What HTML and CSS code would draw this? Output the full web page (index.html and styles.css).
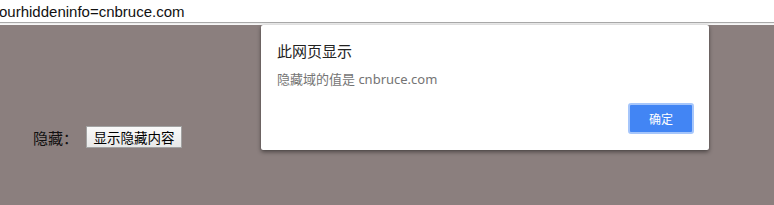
FILE: index.html
```html
<!DOCTYPE html>
<html lang="zh-CN">
<head>
    <meta charset="UTF-8">
    <title>隐藏域</title>
    <link rel="stylesheet" href="styles.css">
</head>
<body>
    <div class="address-bar">
        <span class="url">ourhiddeninfo=cnbruce.com</span>
    </div>
    <div class="page">
        <form class="hidden-form">
            <input type="hidden" name="yourhiddeninfo" value="cnbruce.com">
            <span class="label">隐藏：</span>
            <button type="button" class="show-btn">显示隐藏内容</button>
        </form>
    </div>

    <div class="alert">
        <div class="alert-title">此网页显示</div>
        <div class="alert-msg">隐藏域的值是 cnbruce.com</div>
        <div class="alert-actions">
            <button class="ok-btn">确定</button>
        </div>
    </div>
</body>
</html>
```

FILE: styles.css
```css
html, body {
    margin: 0;
    padding: 0;
    height: 100%;
}
body {
    font-family: "Noto Sans", "Noto Sans CJK SC", sans-serif;
    background: #8b7f7e;
    overflow: hidden;
    position: relative;
}
.address-bar {
    height: 22px;
    background: #fff;
    border-bottom: 1px solid #a9a9a9;
    box-shadow: 0 1px 0 #ececec, 0 2px 0 #f6f6f6;
    overflow: hidden;
    white-space: nowrap;
}
.url {
    display: inline-block;
    margin-left: -1px;
    font-family: "Liberation Sans", sans-serif;
    font-size: 15px;
    line-height: 18px;
    color: #111;
}
.page {
    padding: 103px 0 0 33px;
}
.hidden-form {
    display: flex;
    align-items: center;
}
.label {
    font-family: "Noto Sans CJK SC", sans-serif;
    font-size: 15px;
    color: #111;
    width: 53px;
}
.show-btn {
    font-family: "Noto Sans CJK SC", sans-serif;
    font-size: 13.5px;
    height: 22px;
    width: 96px;
    padding: 0;
    color: #000;
    background: linear-gradient(#fafafa, #e8e8e8);
    border: 1px solid #a2a2a2;
    border-radius: 0;
    line-height: 18px;
}
.alert {
    position: absolute;
    left: 261px;
    top: 25px;
    width: 448px;
    height: 125px;
    background: #fff;
    border-radius: 2px;
    box-shadow: 0 2px 4px rgba(0, 0, 0, 0.45), 0 0 1px rgba(0, 0, 0, 0.4);
    box-sizing: border-box;
    padding: 15px 15px 0 16px;
}
.alert-title {
    font-family: "Noto Sans CJK SC", sans-serif;
    font-size: 15px;
    color: #222;
    line-height: 22px;
}
.alert-msg {
    margin-top: 8px;
    font-family: "Noto Sans", "Noto Sans CJK SC", sans-serif;
    font-size: 13px;
    color: #747474;
    line-height: 18px;
}
.alert-actions {
    display: flex;
    justify-content: flex-end;
    margin-top: 15px;
}
.ok-btn {
    width: 66px;
    height: 31px;
    background: #4285f4;
    color: #fff;
    border: 2px solid #a6c6fb;
    border-radius: 3px;
    font-family: "Noto Sans CJK SC", sans-serif;
    font-size: 12px;
    padding: 0;
}
```
